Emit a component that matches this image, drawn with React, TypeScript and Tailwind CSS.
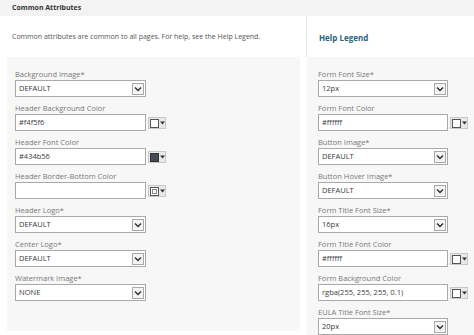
import React from "react";

const font = { fontFamily: '"Open Sans", "Noto Sans", sans-serif' };

function Chevron() {
  return (
    <span className="absolute right-[1px] top-[2px] flex h-[12px] w-[12px] items-center justify-center border border-[#a8a8a8] bg-[#f4f4f4]">
      <svg width="8" height="6" viewBox="0 0 8 6">
        <path d="M1 1.5 L4 4.5 L7 1.5" fill="none" stroke="#333" strokeWidth="1.5" />
      </svg>
    </span>
  );
}

function SelectRow({ label, value, w }: { label: string; value: string; w: number }) {
  return (
    <div className="mb-[6px]">
      <div className="h-[11px] text-[7.5px] leading-[11px] text-[#777]">{label}</div>
      <div className="flex items-center">
        <div
          className="relative flex h-[17px] items-center border border-[#a9a9a9] bg-white pl-[3px] text-[7.5px] text-[#3a3a3a]"
          style={{ width: w }}
        >
          {value}
          <Chevron />
        </div>
      </div>
    </div>
  );
}

function Swatch({ kind }: { kind: "white" | "dark" | "none" }) {
  return (
    <span className="ml-[2px] mt-[3px] flex h-[12px] w-[18px] items-center gap-[1px] border border-[#c8c8c8] bg-[#e9e9e9] pl-[1px]">
      {kind === "none" ? (
        <svg width="9" height="9" viewBox="0 0 9 9">
          <rect x="0.5" y="0.5" width="8" height="8" fill="#fff" stroke="#555" />
          <rect x="2.5" y="2.5" width="4" height="4" fill="none" stroke="#888" />
        </svg>
      ) : (
        <span
          className={
            kind === "dark"
              ? "h-[9px] w-[9px] border border-[#333] bg-[#434b56]"
              : "h-[9px] w-[9px] border border-[#555] bg-white"
          }
        />
      )}
      <svg width="5" height="4" viewBox="0 0 5 4">
        <path d="M0 0.5 L5 0.5 L2.5 3.5 Z" fill="#333" />
      </svg>
    </span>
  );
}

function ColorRow({
  label,
  value,
  kind,
  w,
}: {
  label: string;
  value: string;
  kind: "white" | "dark" | "none";
  w: number;
}) {
  return (
    <div className="mb-[6px]">
      <div className="h-[11px] text-[7.5px] leading-[11px] text-[#777]">{label}</div>
      <div className="flex items-start">
        <div
          className="flex h-[17px] items-center border border-[#a9a9a9] bg-white pl-[3px] text-[7.5px] text-[#3a3a3a]"
          style={{ width: w }}
        >
          {value}
        </div>
        <Swatch kind={kind} />
      </div>
    </div>
  );
}

export default function App() {
  return (
    <div className="h-[335px] w-[474px] overflow-hidden bg-white" style={font}>
      <div className="flex h-[16px] items-center bg-[#f3f3f3] pl-[12px] text-[7px] font-bold text-[#333]">
        Common Attributes
      </div>
      <div className="flex">
        <div className="w-[306px]">
          <div className="flex h-[41px] items-center pl-[12px] pt-[2px] text-[7px] text-[#555]">
            Common attributes are common to all pages. For help, see the Help Legend.
          </div>
          <div className="ml-[7px] h-[274px] w-[293px] bg-[#f7f7f7] pl-[8px] pt-[12px]">
            <SelectRow label="Background Image*" value="DEFAULT" w={131} />
            <ColorRow label="Header Background Color" value="#f4f5f6" kind="white" w={131} />
            <ColorRow label="Header Font Color" value="#434b56" kind="dark" w={131} />
            <ColorRow label="Header Border-Bottom Color" value="" kind="none" w={131} />
            <SelectRow label="Header Logo*" value="DEFAULT" w={131} />
            <SelectRow label="Center Logo*" value="DEFAULT" w={131} />
            <SelectRow label="Watermark Image*" value="NONE" w={131} />
          </div>
        </div>
        <div className="flex-1">
          <div className="flex h-[41px] items-center border-l border-[#e6e6e6] pl-[12px] pt-[2px] text-[8px] font-bold text-[#2a6478]">
            Help Legend
          </div>
          <div className="ml-[1px] h-[300px] bg-[#f7f7f7] pl-[11px] pt-[12px]">
            <SelectRow label="Form Font Size*" value="12px" w={130} />
            <ColorRow label="Form Font Color" value="#ffffff" kind="white" w={130} />
            <SelectRow label="Button Image*" value="DEFAULT" w={130} />
            <SelectRow label="Button Hover Image*" value="DEFAULT" w={130} />
            <SelectRow label="Form Title Font Size*" value="16px" w={130} />
            <ColorRow label="Form Title Font Color" value="#ffffff" kind="white" w={130} />
            <ColorRow label="Form Background Color" value="rgba(255, 255, 255, 0.1)" kind="white" w={130} />
            <SelectRow label="EULA Title Font Size*" value="20px" w={130} />
          </div>
        </div>
      </div>
    </div>
  );
}
